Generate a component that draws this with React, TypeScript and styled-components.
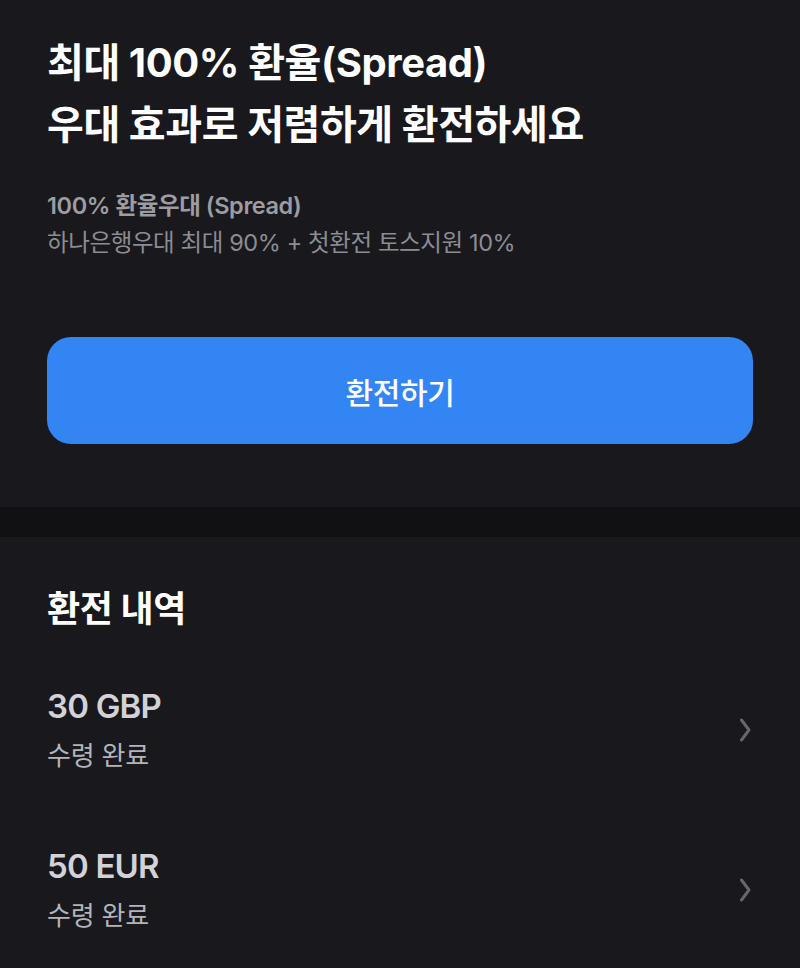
import styled, { createGlobalStyle } from "styled-components";

const GlobalStyle = createGlobalStyle`
  html, body {
    margin: 0;
    padding: 0;
    background: #18181d;
  }
  body {
    font-family: "Inter", "Noto Sans CJK KR", sans-serif;
    -webkit-font-smoothing: antialiased;
  }
`;

const Page = styled.div`
  width: 800px;
  min-height: 968px;
  background: #18181d;
  overflow: hidden;
`;

const Hero = styled.section`
  padding: 32px 47px 63px;
`;

const Title = styled.h1`
  margin: 0;
  font-size: 40px;
  line-height: 62px;
  font-weight: 700;
  color: #ffffff;
  letter-spacing: -0.4px;
`;

const Benefit = styled.div`
  margin-top: 31px;
  display: flex;
  flex-direction: column;
`;

const BenefitLine = styled.p<{ $strong?: boolean }>`
  margin: 0;
  font-size: 23.5px;
  line-height: 37px;
  font-weight: ${(p) => (p.$strong ? 600 : 400)};
  color: ${(p) => (p.$strong ? "#9c9ca2" : "#8c8c92")};
  letter-spacing: -0.4px;
`;

const PrimaryButton = styled.button`
  display: block;
  margin-top: 76px;
  width: 100%;
  height: 107px;
  border: none;
  border-radius: 24px;
  background: #3485f4;
  color: #ffffff;
  font-family: inherit;
  font-size: 30px;
  font-weight: 500;
  letter-spacing: -0.3px;
  cursor: pointer;
`;

const Divider = styled.div`
  height: 30px;
  background: #111114;
`;

const History = styled.section`
  padding: 50px 47px 0;
`;

const SectionTitle = styled.h2`
  margin: 0;
  font-size: 36px;
  line-height: 44px;
  font-weight: 700;
  color: #ffffff;
  letter-spacing: -0.4px;
`;

const List = styled.ul`
  list-style: none;
  margin: 55px 0 0;
  padding: 0;
  display: flex;
  flex-direction: column;
  gap: 73px;
`;

const Row = styled.li`
  display: flex;
  align-items: center;
  justify-content: space-between;
  cursor: pointer;
`;

const RowText = styled.div`
  display: flex;
  flex-direction: column;
  gap: 13px;
`;

const Amount = styled.span`
  font-size: 33px;
  line-height: 40px;
  font-weight: 600;
  color: #d2d2d7;
  letter-spacing: -0.8px;
`;

const Status = styled.span`
  font-size: 26px;
  line-height: 34px;
  font-weight: 400;
  color: #b4b4ba;
  letter-spacing: -0.2px;
`;

const ChevronIcon = styled.svg`
  flex: none;
  margin-right: -2px;
`;

const Chevron = () => (
  <ChevronIcon width="20" height="28" viewBox="0 0 20 28" fill="none">
    <path
      d="M6.5 4 L14 14 L6.5 24"
      stroke="#66666c"
      strokeWidth="3"
      strokeLinecap="round"
      strokeLinejoin="round"
    />
  </ChevronIcon>
);

const items = [
  { amount: "30 GBP", status: "수령 완료" },
  { amount: "50 EUR", status: "수령 완료" },
];

export default function App() {
  return (
    <Page>
      <GlobalStyle />
      <Hero>
        <Title>
          최대 100% 환율(Spread)
          <br />
          우대 효과로 저렴하게 환전하세요
        </Title>
        <Benefit>
          <BenefitLine $strong>100% 환율우대 (Spread)</BenefitLine>
          <BenefitLine>하나은행우대 최대 90% + 첫환전 토스지원 10%</BenefitLine>
        </Benefit>
        <PrimaryButton>환전하기</PrimaryButton>
      </Hero>
      <Divider />
      <History>
        <SectionTitle>환전 내역</SectionTitle>
        <List>
          {items.map((it) => (
            <Row key={it.amount}>
              <RowText>
                <Amount>{it.amount}</Amount>
                <Status>{it.status}</Status>
              </RowText>
              <Chevron />
            </Row>
          ))}
        </List>
      </History>
    </Page>
  );
}
